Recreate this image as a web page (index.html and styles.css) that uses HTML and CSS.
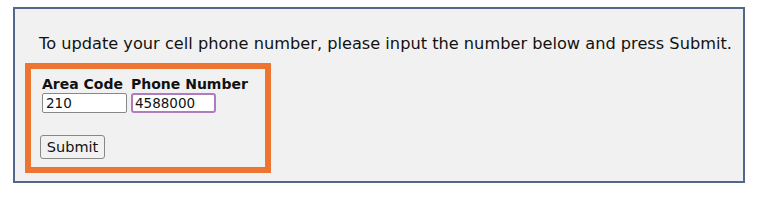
FILE: index.html
```html
<!DOCTYPE html>
<html lang="en">
<head>
  <meta charset="UTF-8" />
  <title>Update Cell Phone</title>
  <link rel="stylesheet" href="styles.css">
</head>
<body>
  <div class="panel">
    <p class="intro">To update your cell phone number, please input the number below and press Submit.</p>

    <form class="phone-form" onsubmit="return false">
      <table class="fields">
        <tr>
          <th>Area Code</th>
          <th>Phone Number</th>
        </tr>
        <tr>
          <td><input type="text" class="area" value="210" /></td>
          <td><input type="text" class="number active" value="4588000" /></td>
        </tr>
      </table>
      <button class="submit">Submit</button>
    </form>
  </div>
</body>
</html>
```

FILE: styles.css
```css
body {
  margin: 0;
  background: #fff;
  font-family: "DejaVu Sans", Verdana, sans-serif;
  color: #111;
}
.panel {
  margin: 7px 0 0 13px;
  width: 718px;
  height: 172px;
  background: #f1f1f1;
  border: 2px solid #53678a;
  padding: 0 0 0 10px;
  box-sizing: content-box;
}
.intro {
  margin: 0;
  padding: 26px 0 0 14px;
  font-size: 16.2px;
  line-height: 18px;
  white-space: nowrap;
}
.phone-form {
  display: inline-block;
  margin-top: 10px;
  width: 234px;
  height: 98px;
  border: 6px solid #ee7531;
  padding: 0;
}
.fields {
  border-collapse: collapse;
  margin: 7px 0 0 9px;
}
.fields th {
  text-align: left;
  font-size: 14px;
  font-weight: bold;
  padding: 0 2px;
  line-height: 17px;
}
.fields td {
  padding: 0 2px;
}
.fields input {
  width: 85px;
  height: 20px;
  box-sizing: border-box;
  margin: 0;
  padding: 0 3px;
  font-family: "DejaVu Sans", Verdana, sans-serif;
  font-size: 13.5px;
  color: #111;
  border: 1px solid #888;
  border-radius: 2px;
  background: #fff;
}
.fields input.active {
  border: 2px solid #b07cc0;
  border-radius: 3px;
  padding: 0 2px;
}
.submit {
  display: block;
  margin: 22px 0 0 9px;
  height: 24px;
  width: 65px;
  padding: 0;
  font-family: "DejaVu Sans", Verdana, sans-serif;
  font-size: 14.5px;
  color: #111;
  background: #f1f1f1;
  border: 1px solid #888;
  border-radius: 3px;
}
```
